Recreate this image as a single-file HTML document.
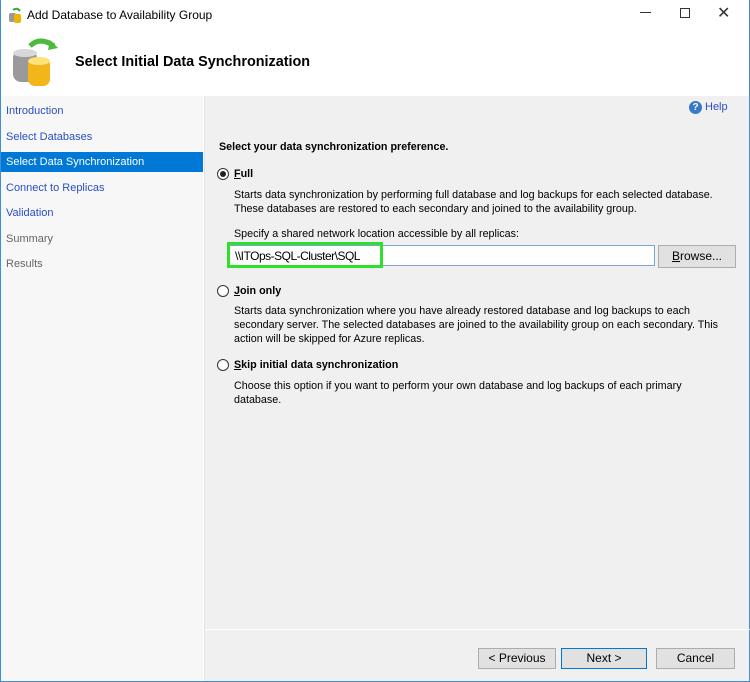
<!DOCTYPE html>
<html><head><style>
*{margin:0;padding:0;box-sizing:border-box}
body{width:750px;height:682px;background:#fff;font-family:"Liberation Sans",sans-serif;font-size:10.75px;color:#000;position:relative;overflow:hidden}
.win{position:absolute;left:0;top:0;width:750px;height:682px;border:1px solid #3c8fd8;border-top:none}
.abs{position:absolute;white-space:nowrap}
.nav{position:absolute;left:1px;top:96px;width:202px;height:585px;background:#f7f7f7}
.nav div{position:absolute;left:5px;font-size:11px;color:#2a4fc0}
.right{position:absolute;left:204px;top:96px;width:545px;height:585px;background:#f0f0f0;border-left:1px solid #e3e3e3}
.btn{position:absolute;top:648px;height:21px;background:#e1e1e1;border:1px solid #adadad;text-align:center;line-height:19px;font-size:12px}
.radio{position:absolute;width:12px;height:12px;border:1px solid #333;border-radius:50%;background:#fff}
</style></head><body>
<div class="win"></div>
<svg class="abs" style="left:8px;top:7px" width="16" height="16"><rect x="1" y="6" width="7" height="9" rx="2" fill="#999"/><rect x="6" y="7" width="7" height="9" rx="2" fill="#f0b400"/><path d="M5 3 Q9 0 12 4" stroke="#3aa53a" stroke-width="2" fill="none"/></svg>
<div class="abs" style="left:27px;top:8px;font-size:12px">Add Database to Availability Group</div>
<div class="abs" style="left:640px;top:12px;width:11px;height:1px;background:#333"></div>
<div class="abs" style="left:680px;top:8px;width:10px;height:10px;border:1px solid #333"></div>
<div class="abs" style="left:717px;top:3px;font-size:16px;color:#333">✕</div>
<svg class="abs" style="left:10px;top:36px" width="48" height="52">
<path d="M20 10 Q30 0 44 10" stroke="#4cba3c" stroke-width="5" fill="none"/><path d="M40 4 L48 12 L38 14z" fill="#4cba3c"/>
<rect x="3" y="14" width="24" height="32" rx="8" fill="#9a9a9a"/><ellipse cx="15" cy="17" rx="12" ry="4" fill="#d8d8d8"/>
<rect x="18" y="22" width="22" height="28" rx="7" fill="#f2b51a"/><ellipse cx="29" cy="25" rx="11" ry="4" fill="#ffe27a"/>
</svg>
<div class="abs" style="left:75px;top:54px;font-size:14.4px;font-weight:bold">Select Initial Data Synchronization</div>
<div class="nav">
<div style="top:9px">Introduction</div>
<div style="top:35px">Select Databases</div>
<div style="top:56px;left:0;width:202px;height:20px;background:#0078d7;color:#fff;padding:4px 5px">Select Data Synchronization</div>
<div style="top:86px">Connect to Replicas</div>
<div style="top:111px">Validation</div>
<div style="top:137px;color:#666">Summary</div>
<div style="top:162px;color:#666">Results</div>
</div>
<div class="right">
<div class="abs" style="left:484px;top:5px;width:13px;height:13px;border-radius:50%;background:#3a78c8;color:#fff;font-size:10px;font-weight:bold;text-align:center;line-height:13px">?</div>
<div class="abs" style="left:500px;top:5px;color:#2a4fc0;font-size:11px">Help</div>
<div class="abs" style="left:14px;top:45px;font-weight:bold">Select your data synchronization preference.</div>
<div class="radio" style="left:12px;top:72px"><div style="position:absolute;left:2px;top:2px;width:6px;height:6px;border-radius:50%;background:#222"></div></div>
<div class="abs" style="left:29px;top:72px;font-weight:bold"><u>F</u>ull</div>
<div class="abs" style="left:29px;top:92px;line-height:14px">Starts data synchronization by performing full database and log backups for each selected database.<br>These databases are restored to each secondary and joined to the availability group.</div>
<div class="abs" style="left:29px;top:132px">Specify a shared network location accessible by all replicas:</div>
<div class="abs" style="left:24px;top:149px;width:426px;height:21px;background:#fff;border:1px solid #7aa7d8"></div>
<div class="abs" style="left:22px;top:146px;width:156px;height:26px;border:3px solid #2ee02a"></div>
<div class="abs" style="left:30px;top:153px;font-size:12px;letter-spacing:-0.5px">\\ITOps-SQL-Cluster\SQL</div>
<div class="btn" style="left:453px;top:149px;width:78px;height:23px;line-height:21px"><u>B</u>rowse...</div>
<div class="radio" style="left:12px;top:189px"></div>
<div class="abs" style="left:29px;top:189px;font-weight:bold"><u>J</u>oin only</div>
<div class="abs" style="left:29px;top:208px;line-height:14px">Starts data synchronization where you have already restored database and log backups to each<br>secondary server. The selected databases are joined to the availability group on each secondary. This<br>action will be skipped for Azure replicas.</div>
<div class="radio" style="left:12px;top:263px"></div>
<div class="abs" style="left:29px;top:263px;font-weight:bold"><u>S</u>kip initial data synchronization</div>
<div class="abs" style="left:29px;top:283px;line-height:14px">Choose this option if you want to perform your own database and log backups of each primary<br>database.</div>
<div class="abs" style="left:0;top:533px;width:545px;height:1px;background:#fff"></div>
</div>
<div class="btn" style="left:478px;width:78px">&lt; Previous</div>
<div class="btn" style="left:561px;width:86px;border:1px solid #0078d7">Next &gt;</div>
<div class="btn" style="left:656px;width:79px">Cancel</div>
</body></html>
